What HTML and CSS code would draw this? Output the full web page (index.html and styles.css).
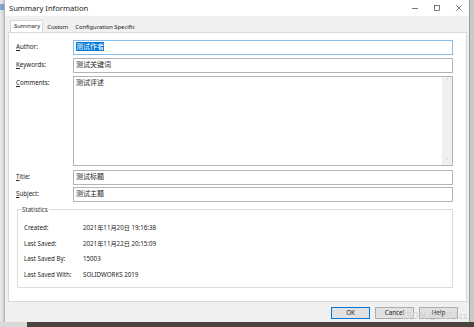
FILE: index.html
```html
<!DOCTYPE html>
<html lang="en">
<head>
  <meta charset="UTF-8">
  <title>Summary Information</title>
  <link rel="stylesheet" href="styles.css">
</head>
<body>
  <div class="screen">
    <div class="row">
      <div class="edge-left"></div>
      <div class="dialog">
        <div class="titlebar">
          <span class="title">Summary Information</span>
          <div class="win-btns">
            <svg width="8" height="8" viewBox="0 0 8 8"><path d="M1 4.5h6" stroke="#444" stroke-width="0.7"/></svg>
            <svg width="8" height="8" viewBox="0 0 8 8"><rect x="1.5" y="1.5" width="5" height="5" fill="none" stroke="#444" stroke-width="0.7"/></svg>
            <svg width="8" height="8" viewBox="0 0 8 8"><path d="M1.3 1.3l5.4 5.4M6.7 1.3l-5.4 5.4" stroke="#444" stroke-width="0.7"/></svg>
          </div>
        </div>

        <div class="body">
          <div class="tabs">
            <div class="tab active">Summary</div>
            <div class="tab">Custom</div>
            <div class="tab">Configuration Specific</div>
          </div>

          <div class="panel">
            <div class="field">
              <label><u>A</u>uthor:</label>
              <div class="input focused"><span class="sel">测试作者</span></div>
            </div>
            <div class="field">
              <label><u>K</u>eywords:</label>
              <div class="input">测试关键词</div>
            </div>
            <div class="field">
              <label><u>C</u>omments:</label>
              <div class="input textarea">
                <span class="ta-text">测试评述</span>
                <div class="scrollbar">
                  <span class="arrow">&#x2C4;</span>
                  <span class="arrow">&#x2C5;</span>
                </div>
              </div>
            </div>
            <div class="field">
              <label><u>T</u>itle:</label>
              <div class="input">测试标题</div>
            </div>
            <div class="field">
              <label><u>S</u>ubject:</label>
              <div class="input">测试主题</div>
            </div>

            <div class="group">
              <span class="legend">Statistics</span>
              <div class="stat"><span class="k">Created:</span><span>2021年11月20日 19:16:38</span></div>
              <div class="stat"><span class="k">Last Saved:</span><span>2021年11月22日 20:15:09</span></div>
              <div class="stat"><span class="k">Last Saved By:</span><span>15003</span></div>
              <div class="stat"><span class="k">Last Saved With:</span><span>SOLIDWORKS 2019</span></div>
            </div>
          </div>

          <div class="buttons">
            <button class="btn default">OK</button>
            <button class="btn">Cancel</button>
            <button class="btn">Help</button>
          </div>
        </div>
      </div>
      <div class="edge-right"></div>
    </div>
    <div class="under"><div class="under-light"></div><div class="under-dark"></div></div>
    <div class="watermark">CSDN @itd51cc</div>
  </div>
</body>
</html>
```

FILE: styles.css
```css
* { margin: 0; padding: 0; box-sizing: border-box; }
html, body {
  width: 474px;
  height: 327px;
  overflow: hidden;
  background: #e9e9e9;
  font-family: 'Noto Sans', 'Noto Sans CJK SC', sans-serif;
  color: #1a1a1a;
}
.screen {
  position: relative;
  width: 474px;
  height: 327px;
  display: flex;
  flex-direction: column;
}
.row {
  display: flex;
  height: 322px;
}
.edge-left {
  width: 4px;
  background: linear-gradient(#e4e4e4 0, #e4e4e4 4px, #7fa7d1 4px, #7fa7d1 10px, #e6e6e6 10px);
}
.edge-right {
  width: 5px;
  background: #c9c9c9;
  border-left: 1px solid #9a9a9a;
}
.dialog {
  width: 465px;
  display: flex;
  flex-direction: column;
  background: #f0f0f0;
  border-left: 1px solid #b5b5b5;
  box-shadow: 0 1px 3px rgba(0,0,0,0.25);
}
.titlebar {
  height: 16px;
  background: #fff;
  display: flex;
  align-items: center;
  justify-content: space-between;
  padding-left: 4px;
}
.title {
  font-size: 7.6px;
  color: #222;
}
.win-btns {
  display: flex;
  gap: 14px;
  padding-right: 6px;
}
.body {
  flex: 1;
  display: flex;
  flex-direction: column;
  padding: 4px 2px 0 3px;
}
.tabs {
  display: flex;
  padding-left: 2px;
  height: 12px;
  align-items: flex-end;
}
.tab {
  font-size: 5.8px;
  height: 11px;
  line-height: 10px;
  padding: 0 2px 0 3px;
  border: 1px solid transparent;
  border-bottom: none;
  color: #1a1a1a;
}
.tab.active {
  background: #fff;
  height: 12px;
  border-color: #d9d9d9;
  position: relative;
  z-index: 1;
}
.panel {
  height: 270px;
  background: #fff;
  border: 1px solid #d9d9d9;
  padding: 7px 13px 0 7px;
  display: flex;
  flex-direction: column;
}
.field {
  display: flex;
  margin-bottom: 3px;
}
.field label {
  width: 57px;
  font-size: 6.2px;
  padding-top: 2px;
  color: #222;
}
.input {
  flex: 1;
  height: 15px;
  border: 1px solid #b4b4b4;
  font-size: 7px;
  line-height: 12px;
  padding-left: 2px;
  color: #222;
}
.input.focused {
  border-color: #86bde9;
}
.sel {
  background: #0078d7;
  color: #fff;
}
.textarea {
  height: 90px;
  display: flex;
  justify-content: space-between;
  padding-right: 0;
}
.scrollbar {
  width: 10px;
  background: #f0f0f0;
  display: flex;
  flex-direction: column;
  justify-content: space-between;
  align-items: center;
  font-size: 6px;
  color: #a0a0a0;
  line-height: 8px;
}
.field:nth-child(3) { margin-bottom: 4px; }
.field:nth-child(4) { margin-bottom: 2px; }
.group {
  margin: 4px 0 0 1px;
  height: 79px;
  border: 1px solid #dcdcdc;
  position: relative;
  padding: 13px 0 0 6px;
}
.legend {
  position: absolute;
  top: -5px;
  left: 3px;
  background: #fff;
  padding: 0 1px;
  font-size: 6.2px;
  color: #333;
}
.stat {
  display: flex;
  font-size: 6.2px;
  height: 15.5px;
  line-height: 10px;
  color: #222;
}
.stat .k {
  width: 59px;
}
.buttons {
  flex: 1;
  display: flex;
  justify-content: flex-end;
  align-items: center;
  gap: 5px;
  padding-right: 9px;
  padding-top: 1px;
}
.btn {
  width: 39px;
  height: 12px;
  font-family: inherit;
  font-size: 6.2px;
  background: #e1e1e1;
  border: 1px solid #adadad;
  color: #222;
}
.btn.default {
  border: 1px solid #0078d7;
  box-shadow: inset 0 0 0 1px #e1e1e1;
}
.under {
  height: 5px;
  display: flex;
}
.under-light {
  width: 27px;
  background: #d9d9d9;
}
.under-dark {
  flex: 1;
  background: #4b433e;
}
.watermark {
  position: absolute;
  right: 6px;
  bottom: 5px;
  font-size: 9px;
  color: rgba(205,205,205,0.9);
  letter-spacing: 0.2px;
}
```
